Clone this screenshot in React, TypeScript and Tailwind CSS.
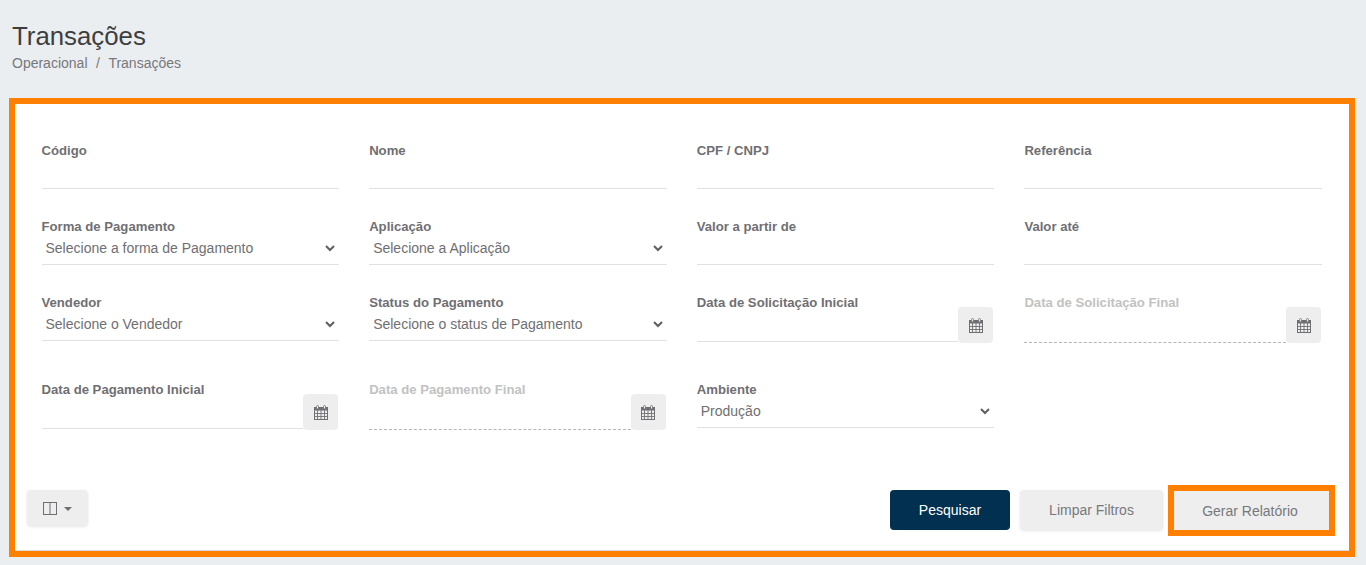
function CalendarIcon() {
  return (
    <svg width="14" height="15" viewBox="0 0 14 15" fill="none" className="text-[#6f6f73]">
      <rect x="0.5" y="2.5" width="13" height="12" stroke="currentColor" />
      <rect x="0" y="2" width="14" height="3.5" fill="currentColor" />
      <rect x="2.5" y="0.5" width="2" height="3.5" rx="1" fill="#eeeeee" stroke="currentColor" strokeWidth="0.8" />
      <rect x="9.5" y="0.5" width="2" height="3.5" rx="1" fill="#eeeeee" stroke="currentColor" strokeWidth="0.8" />
      <path d="M0 8.5H14M0 11.5H14M3.5 5V15M7 5V15M10.5 5V15" stroke="currentColor" strokeWidth="0.9" />
    </svg>
  );
}

function Label({ text, disabled }: { text: string; disabled?: boolean }) {
  return (
    <label className={`block h-5 text-[13.15px] leading-5 font-bold ${disabled ? "text-[#c2c2c2]" : "text-[#6f6f73]"}`}>
      {text}
    </label>
  );
}

function TextField({ label }: { label: string }) {
  return (
    <div className="h-12">
      <Label text={label} />
      <input className="block h-7 w-full border-b border-[#dfe1e3] bg-transparent text-sm outline-none" />
    </div>
  );
}

function SelectField({ label, placeholder, options }: { label: string; placeholder: string; options?: string[] }) {
  return (
    <div className="h-12">
      <Label text={label} />
      <div className="relative">
        <select className="block h-7 w-full appearance-none border-b border-[#dfe1e3] bg-white pb-[5px] pl-1 text-sm text-[#6f6f73] outline-none">
          <option>{placeholder}</option>
          {options?.map((o) => <option key={o}>{o}</option>)}
        </select>
        <svg width="10" height="7" viewBox="0 0 10 7" fill="none" className="absolute top-[8px] right-[4px]">
          <path d="M1 1L5 5L9 1" stroke="#5f5f63" strokeWidth="2" />
        </svg>
      </div>
    </div>
  );
}

function DateField({ label, disabled }: { label: string; disabled?: boolean }) {
  return (
    <div className="mr-px mb-[9px]">
      <Label text={label} disabled={disabled} />
      <div className="-mt-[6px] flex items-start">
        <input
          disabled={disabled}
          className={
            disabled
              ? "block h-9 min-w-0 flex-1 border-b border-dashed border-[#b5b5b5] bg-transparent outline-none"
              : "block h-[35px] min-w-0 flex-1 border-b border-[#dfe1e3] bg-transparent outline-none"
          }
        />
        <button className="flex h-9 w-[35px] shrink-0 items-center justify-center rounded-[4px] bg-[#eeeeee] pt-px">
          <CalendarIcon />
        </button>
      </div>
    </div>
  );
}

export default function App() {
  return (
    <div className="min-h-[565px] bg-[#ebeef1] font-['Liberation_Sans',Arial,sans-serif]">
      <div className="h-[98px] px-3 pt-[20px]">
        <h1 className="text-[25.8px] leading-[32px] text-[#3e3e3e]">Transações</h1>
        <div className="mt-[2px] flex gap-[8.5px] text-sm leading-[18px] text-[#77787c]">
          <span>Operacional</span>
          <span>/</span>
          <span>Transações</span>
        </div>
      </div>

      <div className="ml-[9px] w-[1346px] border-[6px] border-[#ff8000]">
        <div className="h-[447px] border-b border-[#dcdcdc] bg-white pt-[37px] pr-[27px] pl-[26.5px]">
          <div className="grid grid-cols-4 items-start gap-x-[30px] gap-y-[28px]">
            <TextField label="Código" />
            <TextField label="Nome" />
            <TextField label="CPF / CNPJ" />
            <TextField label="Referência" />
            <SelectField label="Forma de Pagamento" placeholder="Selecione a forma de Pagamento" />
            <SelectField label="Aplicação" placeholder="Selecione a Aplicação" />
            <TextField label="Valor a partir de" />
            <TextField label="Valor até" />
            <SelectField label="Vendedor" placeholder="Selecione o Vendedor" />
            <SelectField label="Status do Pagamento" placeholder="Selecione o status de Pagamento" />
            <DateField label="Data de Solicitação Inicial" />
            <DateField label="Data de Solicitação Final" disabled />
            <DateField label="Data de Pagamento Inicial" />
            <DateField label="Data de Pagamento Final" disabled />
            <SelectField label="Ambiente" placeholder="Produção" />
          </div>

          <div className="-ml-[15px] mt-[51px] -mr-[7px] flex items-start justify-between">
            <button className="flex h-9 w-[61px] items-center justify-center gap-[7px] rounded-[4px] bg-[#eeeeee] shadow-[0_1px_3px_rgba(0,0,0,0.1)]">
              <svg width="14" height="13" viewBox="0 0 14 13" fill="none">
                <rect x="0.5" y="0.5" width="13" height="12" stroke="#6f6f73" />
                <path d="M7 0V13" stroke="#6f6f73" />
              </svg>
              <span className="mt-[2px] h-0 w-0 border-x-[4px] border-t-[4px] border-x-transparent border-t-[#6f6f73]" />
            </button>
            <div className="flex gap-[10px]">
              <button className="h-10 w-[120px] rounded-[4px] bg-[#023050] text-sm text-white">Pesquisar</button>
              <button className="h-10 w-[143px] rounded-[4px] bg-[#eeeeee] text-sm text-[#77787c] shadow-[0_1px_3px_rgba(0,0,0,0.1)]">
                Limpar Filtros
              </button>
              <button className="ml-[1px] h-[39px] w-[155px] translate-y-px bg-[#eeeeee] pr-[3px] text-sm text-[#77787c] outline-[6px] outline-[#ff8000]">
                Gerar Relatório
              </button>
            </div>
          </div>
        </div>
      </div>
    </div>
  );
}
